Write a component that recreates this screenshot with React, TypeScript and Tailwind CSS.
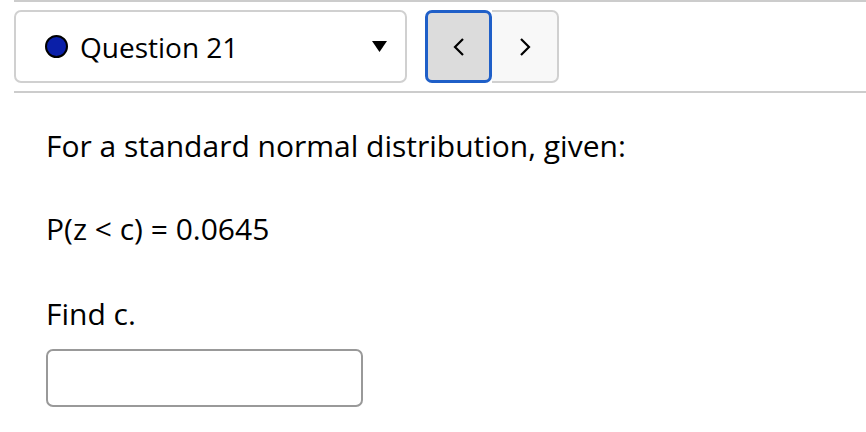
export default function App() {
  return (
    <div className="w-[866px] h-[432px] bg-white overflow-hidden font-['Open_Sans',sans-serif] text-black">
      <div className="ml-[14px] border-t-2 border-b-2 border-[#cccccc] py-[8px] flex">
        <div className="w-[393px] h-[73px] border-2 border-[#d0d0d0] rounded-[7px] flex items-center pl-[29px] pr-[18px]">
          <span className="w-[23px] h-[23px] rounded-full bg-[#0a1fa8] border-2 border-black shrink-0" />
          <span className="ml-[12px] text-[28px] leading-none">Question 21</span>
          <svg className="ml-auto" width="15" height="11" viewBox="0 0 15 11">
            <polygon points="0,0 15,0 7.5,11" fill="black" />
          </svg>
        </div>
        <div className="ml-[18px] flex">
          <button className="w-[67px] h-[73px] bg-[#dcdcdc] border-[3px] border-[#1f5fc8] rounded-[7px] flex items-center justify-center">
            <svg width="14" height="22" viewBox="0 0 14 22">
              <path d="M11 3 L3 11 L11 19" fill="none" stroke="black" strokeWidth="2.2" />
            </svg>
          </button>
          <button className="w-[67px] h-[73px] bg-[#f8f8f8] border-2 border-l-0 border-[#d0d0d0] rounded-r-[7px] flex items-center justify-center">
            <svg width="14" height="22" viewBox="0 0 14 22">
              <path d="M3 3 L11 11 L3 19" fill="none" stroke="black" strokeWidth="2.2" />
            </svg>
          </button>
        </div>
      </div>

      <div className="pl-[46px] pt-[33px] text-[30px] leading-[40px]">
        <p>For a standard normal distribution, given:</p>
        <p className="mt-[43px]">P(z &lt; c) = 0.0645</p>
        <p className="mt-[45px]">Find c.</p>
        <input
          type="text"
          className="mt-[15px] block w-[317px] h-[58px] border-2 border-[#999999] rounded-[7px] px-3 outline-none"
        />
      </div>
    </div>
  );
}
